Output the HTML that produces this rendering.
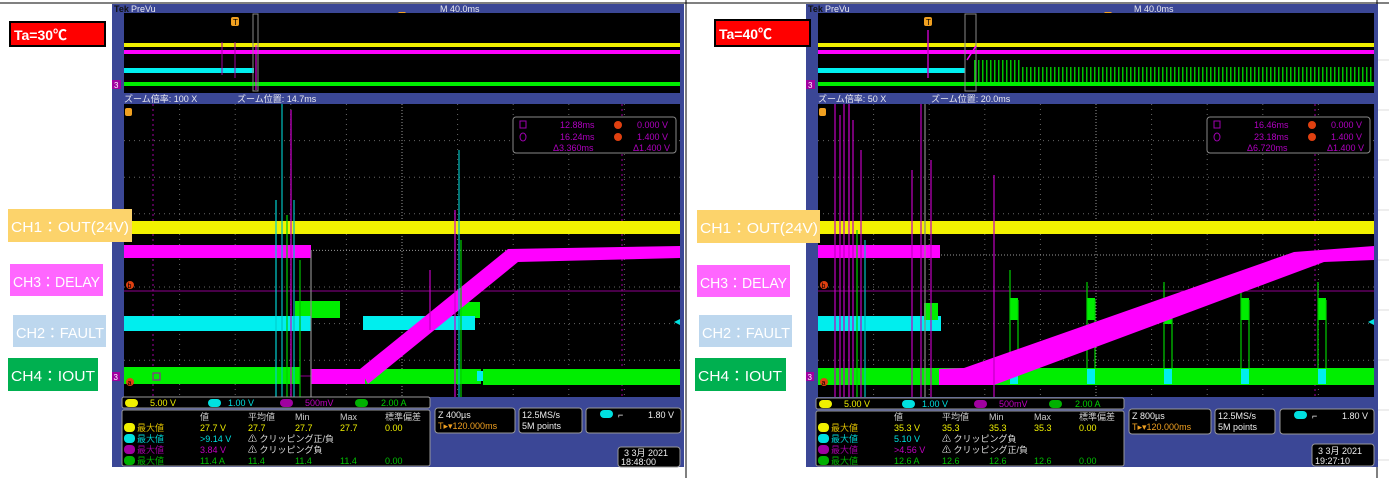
<!DOCTYPE html>
<html><head><meta charset="utf-8"><style>
html,body{margin:0;padding:0;background:#fff;width:1389px;height:478px;overflow:hidden}
svg{display:block}
text{font-family:"Liberation Sans","Noto Sans CJK JP",sans-serif}
</style></head><body>
<svg width="1389" height="478" viewBox="0 0 1389 478" xmlns="http://www.w3.org/2000/svg">
<defs>
<pattern id="gn" width="4" height="20" patternUnits="userSpaceOnUse"><rect width="4" height="20" fill="#000"/><rect width="1.5" height="20" fill="#00c000"/></pattern>
</defs>
<rect width="1389" height="478" fill="#fff"/>
<line x1="0" y1="3" x2="1389" y2="3" stroke="#000" stroke-width="1"/>
<line x1="686" y1="0" x2="686" y2="478" stroke="#000" stroke-width="1"/>
<line x1="1377" y1="0" x2="1377" y2="478" stroke="#000" stroke-width="1"/>
<g stroke="#ddd" stroke-width="1"><line x1="1378" y1="60" x2="1389" y2="60"/><line x1="1378" y1="110" x2="1389" y2="110"/><line x1="1378" y1="160" x2="1389" y2="160"/><line x1="1378" y1="210" x2="1389" y2="210"/><line x1="1378" y1="260" x2="1389" y2="260"/><line x1="1378" y1="310" x2="1389" y2="310"/><line x1="1378" y1="360" x2="1389" y2="360"/><line x1="1378" y1="410" x2="1389" y2="410"/><line x1="1378" y1="460" x2="1389" y2="460"/></g>

<!-- ===== LEFT SCOPE ===== -->
<g id="L">
<rect x="112" y="4" width="572" height="463" fill="#3b4796"/>
<text x="114" y="12" font-size="9" fill="#111" font-weight="bold">Tek</text>
<text x="131" y="12" font-size="9" fill="#e8e8f0">PreVu</text>
<text x="440" y="12" font-size="9" fill="#e8e8f0">M 40.0ms</text>
<polygon points="398,12 406,12 402,16" fill="#f0a020"/>
<rect x="124" y="13" width="556" height="80" fill="#000"/>
<rect x="124" y="43" width="556" height="4" fill="#f0f000"/>
<rect x="124" y="50" width="556" height="4" fill="#ff00ff"/>
<rect x="124" y="68" width="130" height="5" fill="#00f0f0"/>
<rect x="124" y="82" width="556" height="4" fill="#00ee00"/>
<line x1="222" y1="42" x2="222" y2="75" stroke="#a000a0"/><line x1="235" y1="42" x2="235" y2="78" stroke="#a000a0"/>
<rect x="253" y="14" width="5" height="77" fill="none" stroke="#888" stroke-width="1"/>
<line x1="256" y1="45" x2="256" y2="90" stroke="#ff00ff"/>
<rect x="231" y="17" width="8" height="9" rx="2" fill="#f0a020"/><text x="233" y="25" font-size="8" fill="#000">T</text>
<rect x="112" y="80" width="9" height="9" fill="#a000a0"/><text x="114" y="88" font-size="8" fill="#fff">3</text>
<text x="124" y="102" font-size="9" fill="#e8e8f0">ズーム倍率: 100 X</text>
<text x="237" y="102" font-size="9" fill="#e8e8f0">ズーム位置: 14.7ms</text>
<rect x="124" y="104" width="556" height="293" fill="#000"/>
<g stroke="#666" stroke-width="1" stroke-dasharray="1 4">
<line x1="179.6" y1="104" x2="179.6" y2="397"/><line x1="235.2" y1="104" x2="235.2" y2="397"/><line x1="290.8" y1="104" x2="290.8" y2="397"/><line x1="346.4" y1="104" x2="346.4" y2="397"/><line x1="457.6" y1="104" x2="457.6" y2="397"/><line x1="513.2" y1="104" x2="513.2" y2="397"/><line x1="568.8" y1="104" x2="568.8" y2="397"/><line x1="624.4" y1="104" x2="624.4" y2="397"/>
<line x1="124" y1="140.6" x2="680" y2="140.6"/><line x1="124" y1="177.2" x2="680" y2="177.2"/><line x1="124" y1="213.8" x2="680" y2="213.8"/><line x1="124" y1="287" x2="680" y2="287"/><line x1="124" y1="323.6" x2="680" y2="323.6"/><line x1="124" y1="360.2" x2="680" y2="360.2"/>
</g>
<g stroke="#999" stroke-width="1" stroke-dasharray="1 2"><line x1="402" y1="104" x2="402" y2="397"/><line x1="124" y1="250.4" x2="680" y2="250.4"/></g>
<line x1="153" y1="104" x2="153" y2="397" stroke="#a000a0" stroke-dasharray="2 3"/>
<line x1="622" y1="104" x2="622" y2="397" stroke="#a000a0" stroke-dasharray="2 3"/>
<line x1="124" y1="291" x2="680" y2="291" stroke="#900090"/>
<line x1="124" y1="376" x2="680" y2="376" stroke="#900090"/>
<rect x="124" y="221" width="556" height="13" fill="#f2f200"/>
<rect x="124" y="367" width="176" height="17" fill="#00ee00"/>
<rect x="311" y="369" width="170" height="15" fill="#00ee00"/>
<rect x="483" y="369" width="197" height="16" fill="#00ee00"/>
<rect x="295" y="301" width="45" height="17" fill="#00ee00"/>
<rect x="460" y="302" width="20" height="16" fill="#00ee00"/>
<rect x="124" y="316" width="187" height="15" fill="#00eeee"/>
<rect x="363" y="316" width="112" height="14" fill="#00eeee"/>
<rect x="477" y="371" width="6" height="10" fill="#00eeee"/>
<rect x="124" y="245" width="187" height="13" fill="#ff00ff"/>
<rect x="311" y="369" width="54" height="15" fill="#ff00ff"/>
<polygon points="360,369 508,249 680,246 680,258 518,262 368,384" fill="#ff00ff"/>
<g stroke-width="1.2"><line x1="276" y1="200" x2="276" y2="397" stroke="#00d0d0"/><line x1="282" y1="104" x2="282" y2="397" stroke="#00c0c0"/><line x1="287" y1="215" x2="287" y2="397" stroke="#00d000"/><line x1="291" y1="110" x2="291" y2="397" stroke="#d000d0"/><line x1="294" y1="200" x2="294" y2="397" stroke="#00c0c0"/><line x1="300" y1="260" x2="300" y2="397" stroke="#00c000"/><line x1="311" y1="250" x2="311" y2="397" stroke="#888"/><line x1="455" y1="210" x2="455" y2="397" stroke="#d000d0"/><line x1="459" y1="150" x2="459" y2="397" stroke="#00c0c0"/><line x1="461" y1="240" x2="461" y2="397" stroke="#00d000"/><line x1="430" y1="270" x2="430" y2="330" stroke="#c000c0"/></g>
<rect x="153" y="373" width="7" height="7" fill="none" stroke="#b000b0"/>
<rect x="125" y="108" width="7" height="8" rx="2" fill="#f0a020"/>
<circle cx="130" cy="285" r="4" fill="#e04010"/><text x="127.5" y="288" font-size="7" fill="#000">b</text>
<circle cx="130" cy="382" r="4" fill="#e04010"/><text x="127.5" y="385" font-size="7" fill="#000">a</text>
<rect x="112" y="372" width="8" height="9" fill="#a000a0"/><text x="113.5" y="380" font-size="8" fill="#fff">3</text>
<polygon points="674,322 680,319 680,325" fill="#00e0e0"/>
<rect x="513" y="117" width="163" height="36" rx="3" fill="#000" stroke="#888"/>
<g font-size="9" fill="#b000c0"><rect x="520" y="121" width="6" height="7" fill="none" stroke="#a000b0"/><text x="560" y="128">12.88ms</text><text x="637" y="128">0.000 V</text>
<ellipse cx="523" cy="137" rx="3" ry="4" fill="none" stroke="#a000b0"/><text x="560" y="140">16.24ms</text><text x="637" y="140">1.400 V</text>
<text x="553" y="151">Δ3.360ms</text><text x="633" y="151">Δ1.400 V</text></g>
<circle cx="618" cy="125" r="4" fill="#e04010"/><circle cx="618" cy="137" r="4" fill="#e04010"/>
<rect x="122" y="397" width="308" height="11" rx="2" fill="#000" stroke="#999"/>
<g font-size="9"><rect x="125" y="399" width="13" height="8" rx="4" fill="#f0f000"/><text x="150" y="406" fill="#f0f000">5.00 V</text>
<rect x="208" y="399" width="13" height="8" rx="4" fill="#00e0e0"/><text x="228" y="406" fill="#00e0e0">1.00 V</text>
<rect x="280" y="399" width="13" height="8" rx="4" fill="#a000a0"/><text x="305" y="406" fill="#c000c0">500mV</text>
<rect x="355" y="399" width="13" height="8" rx="4" fill="#00b000"/><text x="381" y="406" fill="#00d000">2.00 A</text></g>
<rect x="122" y="410" width="308" height="56" rx="2" fill="#000" stroke="#999"/>
<g font-size="9" fill="#ccc"><text x="200" y="420">値</text><text x="248" y="420">平均値</text><text x="295" y="420">Min</text><text x="340" y="420">Max</text><text x="385" y="420">標準偏差</text></g>
<g font-size="9">
<rect x="124" y="423" width="11" height="9" rx="4" fill="#f0f000"/><text x="137" y="431" fill="#e0c000">最大値</text><text x="200" y="431" fill="#f0f000">27.7 V</text><text x="248" y="431" fill="#f0f000">27.7</text><text x="295" y="431" fill="#f0f000">27.7</text><text x="340" y="431" fill="#f0f000">27.7</text><text x="385" y="431" fill="#f0f000">0.00</text>
<rect x="124" y="434" width="11" height="9" rx="4" fill="#00e0e0"/><text x="137" y="442" fill="#00d0d0">最大値</text><text x="200" y="442" fill="#00e0e0">&gt;9.14 V</text><text x="248" y="442" fill="#ddd">⚠ クリッピング正/負</text>
<rect x="124" y="445" width="11" height="9" rx="4" fill="#a000a0"/><text x="137" y="453" fill="#a000a0">最大値</text><text x="200" y="453" fill="#c000c0">3.84 V</text><text x="248" y="453" fill="#ddd">⚠ クリッピング負</text>
<rect x="124" y="456" width="11" height="9" rx="4" fill="#00b000"/><text x="137" y="464" fill="#00b000">最大値</text><text x="200" y="464" fill="#00c000">11.4 A</text><text x="248" y="464" fill="#00c000">11.4</text><text x="295" y="464" fill="#00c000">11.4</text><text x="340" y="464" fill="#00c000">11.4</text><text x="385" y="464" fill="#00c000">0.00</text>
</g>
<rect x="435" y="408" width="80" height="25" rx="3" fill="#000" stroke="#999"/>
<text x="438" y="418" font-size="9" fill="#eee">Z 400µs</text><text x="438" y="429" font-size="9" fill="#f0a020">T▸▾120.000ms</text>
<rect x="519" y="408" width="63" height="25" rx="3" fill="#000" stroke="#999"/>
<text x="522" y="418" font-size="9" fill="#eee">12.5MS/s</text><text x="522" y="429" font-size="9" fill="#eee">5M points</text>
<rect x="586" y="408" width="95" height="25" rx="3" fill="#000" stroke="#999"/>
<rect x="600" y="410" width="13" height="8" rx="4" fill="#00e0e0"/><text x="618" y="418" font-size="9" fill="#eee">⌐</text><text x="648" y="418" font-size="9" fill="#eee">1.80 V</text>
<rect x="618" y="447" width="62" height="20" rx="3" fill="#000" stroke="#999"/>
<text x="624" y="456" font-size="9" fill="#eee">3 3月  2021</text><text x="621" y="465" font-size="9" fill="#eee">18:48:00</text>
</g>

<!-- ===== RIGHT SCOPE ===== -->
<g transform="translate(694,0)">
<rect x="112" y="4" width="572" height="463" fill="#3b4796"/>
<text x="114" y="12" font-size="9" fill="#111" font-weight="bold">Tek</text>
<text x="131" y="12" font-size="9" fill="#e8e8f0">PreVu</text>
<text x="440" y="12" font-size="9" fill="#e8e8f0">M 40.0ms</text>
<polygon points="410,12 418,12 414,16" fill="#f0a020"/>
<rect x="124" y="13" width="556" height="80" fill="#000"/>
<rect x="124" y="43" width="556" height="4" fill="#f0f000"/>
<rect x="124" y="50" width="556" height="4" fill="#ff00ff"/>
<rect x="124" y="68" width="147" height="5" fill="#00f0f0"/>
<rect x="278" y="60" width="50" height="22" fill="url(#gn)"/>
<rect x="328" y="67" width="352" height="15" fill="url(#gn)"/>
<rect x="124" y="82" width="556" height="4" fill="#00ee00"/>
<line x1="234" y1="30" x2="234" y2="78" stroke="#c000c0" stroke-width="1.5"/>
<rect x="271" y="14" width="11" height="77" fill="none" stroke="#888" stroke-width="1"/>
<line x1="273" y1="60" x2="282" y2="46" stroke="#ff00ff" stroke-width="1.5"/>
<rect x="230" y="17" width="8" height="9" rx="2" fill="#f0a020"/><text x="232" y="25" font-size="8" fill="#000">T</text>
<rect x="112" y="80" width="9" height="9" fill="#a000a0"/><text x="114" y="88" font-size="8" fill="#fff">3</text>
<text x="124" y="102" font-size="9" fill="#e8e8f0">ズーム倍率: 50 X</text>
<text x="237" y="102" font-size="9" fill="#e8e8f0">ズーム位置: 20.0ms</text>
<rect x="124" y="104" width="556" height="293" fill="#000"/>
<g stroke="#666" stroke-width="1" stroke-dasharray="1 4">
<line x1="179.6" y1="104" x2="179.6" y2="397"/><line x1="235.2" y1="104" x2="235.2" y2="397"/><line x1="290.8" y1="104" x2="290.8" y2="397"/><line x1="346.4" y1="104" x2="346.4" y2="397"/><line x1="457.6" y1="104" x2="457.6" y2="397"/><line x1="513.2" y1="104" x2="513.2" y2="397"/><line x1="568.8" y1="104" x2="568.8" y2="397"/><line x1="624.4" y1="104" x2="624.4" y2="397"/>
<line x1="124" y1="140.6" x2="680" y2="140.6"/><line x1="124" y1="177.2" x2="680" y2="177.2"/><line x1="124" y1="213.8" x2="680" y2="213.8"/><line x1="124" y1="287" x2="680" y2="287"/><line x1="124" y1="323.6" x2="680" y2="323.6"/><line x1="124" y1="360.2" x2="680" y2="360.2"/>
</g>
<g stroke="#999" stroke-width="1" stroke-dasharray="1 2"><line x1="402" y1="104" x2="402" y2="397"/><line x1="124" y1="255" x2="680" y2="255"/></g>
<line x1="621" y1="104" x2="621" y2="397" stroke="#a000a0" stroke-dasharray="2 3"/>
<line x1="124" y1="291" x2="680" y2="291" stroke="#900090"/>
<line x1="124" y1="376" x2="680" y2="376" stroke="#900090"/>
<rect x="124" y="221" width="556" height="13" fill="#f2f200"/>
<rect x="124" y="368" width="556" height="17" fill="#00ee00"/>
<rect x="124" y="316" width="123" height="15" fill="#00eeee"/>
<rect x="230" y="303" width="14" height="17" fill="#00ee00"/>
<g fill="#00ee00"><rect x="316" y="298" width="8" height="22"/><rect x="393" y="298" width="8" height="22"/><rect x="470" y="310" width="8" height="14"/><rect x="547" y="298" width="8" height="22"/><rect x="624" y="298" width="8" height="22"/></g>
<g stroke="#00d000" stroke-width="1.2"><line x1="316" y1="270" x2="316" y2="368"/><line x1="324" y1="300" x2="324" y2="368"/><line x1="393" y1="282" x2="393" y2="368"/><line x1="401" y1="300" x2="401" y2="368"/><line x1="470" y1="282" x2="470" y2="368"/><line x1="478" y1="300" x2="478" y2="368"/><line x1="547" y1="282" x2="547" y2="368"/><line x1="555" y1="300" x2="555" y2="368"/><line x1="624" y1="282" x2="624" y2="368"/><line x1="632" y1="300" x2="632" y2="368"/></g>
<g fill="#00eeee"><rect x="316" y="369" width="8" height="15"/><rect x="393" y="369" width="8" height="15"/><rect x="470" y="369" width="8" height="15"/><rect x="547" y="369" width="8" height="15"/><rect x="624" y="369" width="8" height="15"/></g>
<rect x="124" y="245" width="122" height="13" fill="#ff00ff"/>
<polygon points="245,369 270,368 600,252 680,246 680,260 630,262 300,385 245,385" fill="#ff00ff"/>
<g stroke-width="1.2">
<line x1="141" y1="104" x2="141" y2="397" stroke="#c000c0"/><line x1="146" y1="115" x2="146" y2="397" stroke="#c000c0"/><line x1="150" y1="104" x2="150" y2="397" stroke="#c000c0"/><line x1="155" y1="104" x2="155" y2="397" stroke="#d000d0"/><line x1="159" y1="120" x2="159" y2="397" stroke="#c000c0"/><line x1="163" y1="230" x2="163" y2="397" stroke="#00d000"/><line x1="167" y1="150" x2="167" y2="397" stroke="#c000c0"/><line x1="171" y1="240" x2="171" y2="397" stroke="#00c0c0"/>
<line x1="218" y1="170" x2="218" y2="397" stroke="#c000c0"/><line x1="227" y1="104" x2="227" y2="397" stroke="#c000c0"/><line x1="231" y1="104" x2="231" y2="397" stroke="#888"/><line x1="237" y1="160" x2="237" y2="397" stroke="#c000c0"/><line x1="300" y1="175" x2="300" y2="397" stroke="#c000c0"/></g>
<rect x="125" y="108" width="7" height="8" rx="2" fill="#f0a020"/>
<circle cx="130" cy="285" r="4" fill="#e04010"/><text x="127.5" y="288" font-size="7" fill="#000">b</text>
<circle cx="130" cy="382" r="4" fill="#e04010"/><text x="127.5" y="385" font-size="7" fill="#000">a</text>
<rect x="112" y="372" width="8" height="9" fill="#a000a0"/><text x="113.5" y="380" font-size="8" fill="#fff">3</text>
<polygon points="674,322 680,319 680,325" fill="#00e0e0"/>
<rect x="513" y="117" width="163" height="36" rx="3" fill="#000" stroke="#888"/>
<g font-size="9" fill="#b000c0"><rect x="520" y="121" width="6" height="7" fill="none" stroke="#a000b0"/><text x="560" y="128">16.46ms</text><text x="637" y="128">0.000 V</text>
<ellipse cx="523" cy="137" rx="3" ry="4" fill="none" stroke="#a000b0"/><text x="560" y="140">23.18ms</text><text x="637" y="140">1.400 V</text>
<text x="553" y="151">Δ6.720ms</text><text x="633" y="151">Δ1.400 V</text></g>
<circle cx="618" cy="125" r="4" fill="#e04010"/><circle cx="618" cy="137" r="4" fill="#e04010"/>
<rect x="122" y="398" width="308" height="11" rx="2" fill="#000" stroke="#999"/>
<g font-size="9"><rect x="125" y="400" width="13" height="8" rx="4" fill="#f0f000"/><text x="150" y="407" fill="#f0f000">5.00 V</text>
<rect x="208" y="400" width="13" height="8" rx="4" fill="#00e0e0"/><text x="228" y="407" fill="#00e0e0">1.00 V</text>
<rect x="280" y="400" width="13" height="8" rx="4" fill="#a000a0"/><text x="305" y="407" fill="#c000c0">500mV</text>
<rect x="355" y="400" width="13" height="8" rx="4" fill="#00b000"/><text x="381" y="407" fill="#00d000">2.00 A</text></g>
<rect x="122" y="411" width="308" height="55" rx="2" fill="#000" stroke="#999"/>
<g font-size="9" fill="#ccc"><text x="200" y="420">値</text><text x="248" y="420">平均値</text><text x="295" y="420">Min</text><text x="340" y="420">Max</text><text x="385" y="420">標準偏差</text></g>
<g font-size="9">
<rect x="124" y="423" width="11" height="9" rx="4" fill="#f0f000"/><text x="137" y="431" fill="#e0c000">最大値</text><text x="200" y="431" fill="#f0f000">35.3 V</text><text x="248" y="431" fill="#f0f000">35.3</text><text x="295" y="431" fill="#f0f000">35.3</text><text x="340" y="431" fill="#f0f000">35.3</text><text x="385" y="431" fill="#f0f000">0.00</text>
<rect x="124" y="434" width="11" height="9" rx="4" fill="#00e0e0"/><text x="137" y="442" fill="#00d0d0">最大値</text><text x="200" y="442" fill="#00e0e0">5.10 V</text><text x="248" y="442" fill="#ddd">⚠ クリッピング負</text>
<rect x="124" y="445" width="11" height="9" rx="4" fill="#a000a0"/><text x="137" y="453" fill="#a000a0">最大値</text><text x="200" y="453" fill="#c000c0">&gt;4.56 V</text><text x="248" y="453" fill="#ddd">⚠ クリッピング正/負</text>
<rect x="124" y="456" width="11" height="9" rx="4" fill="#00b000"/><text x="137" y="464" fill="#00b000">最大値</text><text x="200" y="464" fill="#00c000">12.6 A</text><text x="248" y="464" fill="#00c000">12.6</text><text x="295" y="464" fill="#00c000">12.6</text><text x="340" y="464" fill="#00c000">12.6</text><text x="385" y="464" fill="#00c000">0.00</text>
</g>
<rect x="435" y="409" width="82" height="25" rx="3" fill="#000" stroke="#999"/>
<text x="438" y="419" font-size="9" fill="#eee">Z 800µs</text><text x="438" y="430" font-size="9" fill="#f0a020">T▸▾120.000ms</text>
<rect x="521" y="409" width="60" height="25" rx="3" fill="#000" stroke="#999"/>
<text x="524" y="419" font-size="9" fill="#eee">12.5MS/s</text><text x="524" y="430" font-size="9" fill="#eee">5M points</text>
<rect x="586" y="409" width="94" height="25" rx="3" fill="#000" stroke="#999"/>
<rect x="600" y="411" width="13" height="8" rx="4" fill="#00e0e0"/><text x="618" y="419" font-size="9" fill="#eee">⌐</text><text x="648" y="419" font-size="9" fill="#eee">1.80 V</text>
<rect x="618" y="444" width="62" height="22" rx="3" fill="#000" stroke="#999"/>
<text x="624" y="454" font-size="9" fill="#eee">3 3月  2021</text><text x="621" y="464" font-size="9" fill="#eee">19:27:10</text>
</g>

<rect x="10" y="22" width="95" height="24" fill="#ff0000" stroke="#000" stroke-width="2"/>
<text x="14" y="40" font-size="14" font-weight="bold" fill="#fff">Ta=30℃</text>
<rect x="715" y="20" width="95" height="26" fill="#ff0000" stroke="#000" stroke-width="2"/>
<text x="719" y="39" font-size="14" font-weight="bold" fill="#fff">Ta=40℃</text>

<g font-size="15" fill="#fff">
<rect x="8" y="209" width="124" height="33" fill="#fcd36b"/><text x="11" y="232" textLength="118" lengthAdjust="spacingAndGlyphs">CH1：OUT(24V)</text>
<rect x="10" y="264" width="93" height="32" fill="#ff66ff"/><text x="13" y="287" textLength="87" lengthAdjust="spacingAndGlyphs">CH3：DELAY</text>
<rect x="13" y="315" width="93" height="32" fill="#bdd7ee"/><text x="16" y="338" textLength="88" lengthAdjust="spacingAndGlyphs">CH2：FAULT</text>
<rect x="8" y="358" width="90" height="33" fill="#00b050"/><text x="11" y="381" textLength="84" lengthAdjust="spacingAndGlyphs">CH4：IOUT</text>
<rect x="697" y="210" width="123" height="33" fill="#fcd36b"/><text x="700" y="233" textLength="118" lengthAdjust="spacingAndGlyphs">CH1：OUT(24V)</text>
<rect x="697" y="265" width="93" height="32" fill="#ff66ff"/><text x="700" y="288" textLength="87" lengthAdjust="spacingAndGlyphs">CH3：DELAY</text>
<rect x="699" y="315" width="93" height="32" fill="#bdd7ee"/><text x="702" y="338" textLength="88" lengthAdjust="spacingAndGlyphs">CH2：FAULT</text>
<rect x="695" y="358" width="91" height="33" fill="#00b050"/><text x="698" y="381" textLength="84" lengthAdjust="spacingAndGlyphs">CH4：IOUT</text>
</g>
</svg>
</body></html>
